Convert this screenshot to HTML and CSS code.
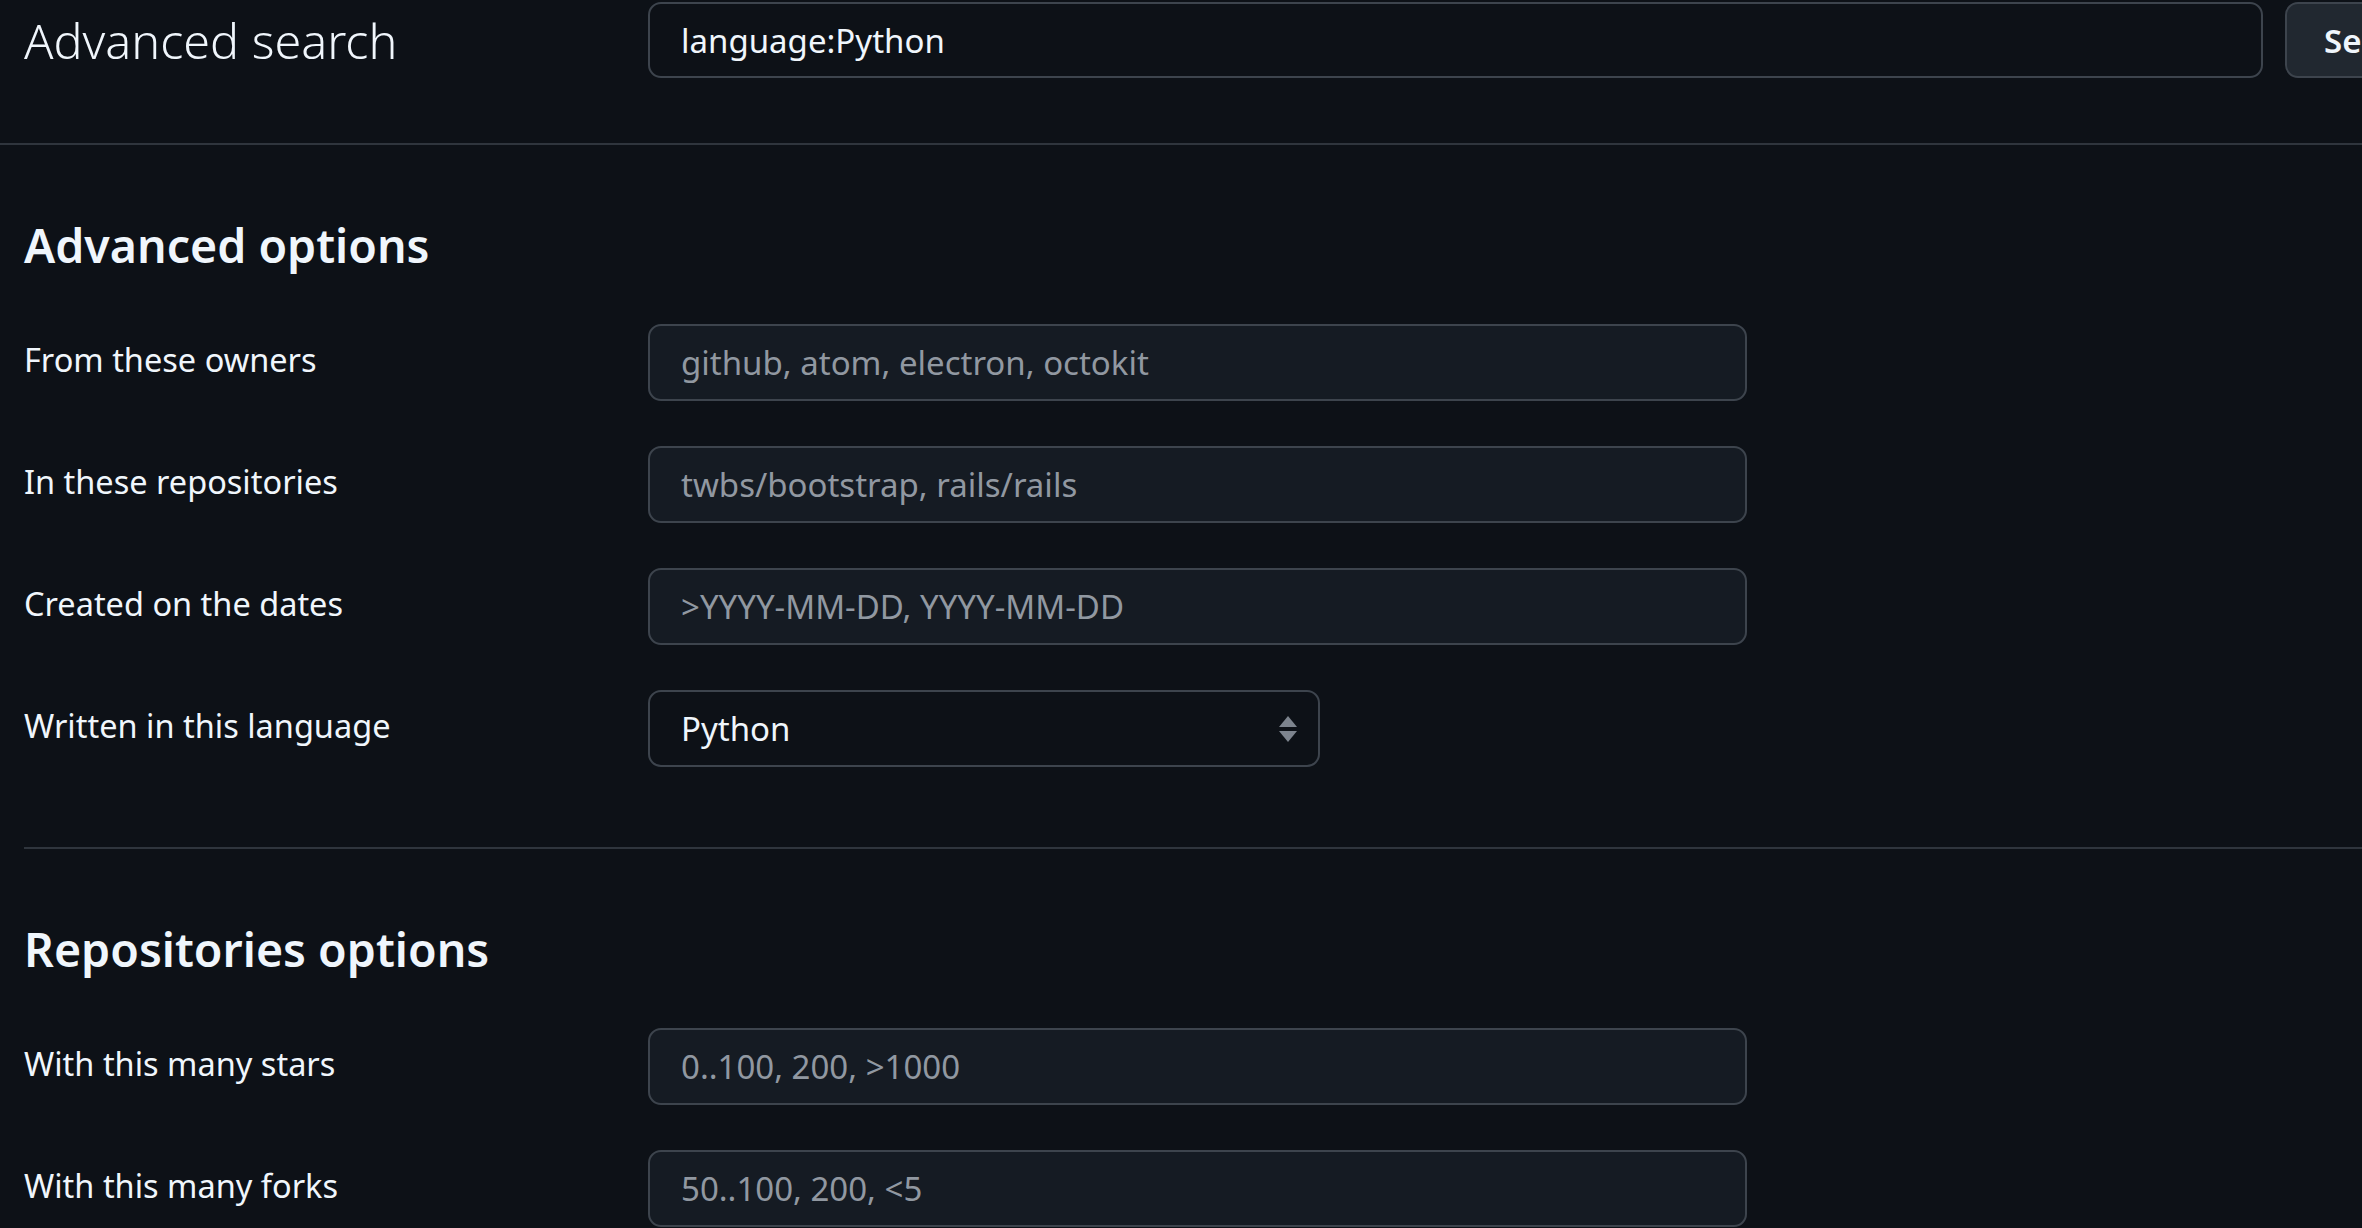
FILE: index.html
```html
<!DOCTYPE html>
<html lang="en">
<head>
    <meta charset="UTF-8">
    <meta name="viewport" content="width=device-width, initial-scale=1.0">
    <title>Advanced search</title>
    <link rel="stylesheet" href="styles.css">
</head>
<body>
    <header class="search-bar">
        <h1 class="page-title">Advanced search</h1>
        <input class="search-input" type="text" value="language:Python">
        <button class="search-btn">Search</button>
    </header>

    <main class="content">
        <section class="options">
            <h2>Advanced options</h2>
            <div class="form-row">
                <label>From these owners</label>
                <input class="field" type="text" placeholder="github, atom, electron, octokit">
            </div>
            <div class="form-row">
                <label>In these repositories</label>
                <input class="field" type="text" placeholder="twbs/bootstrap, rails/rails">
            </div>
            <div class="form-row">
                <label>Created on the dates</label>
                <input class="field" type="text" placeholder="&gt;YYYY-MM-DD, YYYY-MM-DD">
            </div>
            <div class="form-row">
                <label>Written in this language</label>
                <div class="select-wrap">
                    <select class="select">
                        <option>Python</option>
                    </select>
                    <svg class="select-arrows" width="18" height="26" viewBox="0 0 18 26">
                        <path d="M9 0 L18 11 L0 11 Z" fill="#7d848e"/>
                        <path d="M0 15 L18 15 L9 26 Z" fill="#7d848e"/>
                    </svg>
                </div>
            </div>
        </section>

        <section class="options divided">
            <h2>Repositories options</h2>
            <div class="form-row">
                <label>With this many stars</label>
                <input class="field" type="text" placeholder="0..100, 200, &gt;1000">
            </div>
            <div class="form-row">
                <label>With this many forks</label>
                <input class="field" type="text" placeholder="50..100, 200, &lt;5">
            </div>
        </section>
    </main>
</body>
</html>
```

FILE: styles.css
```css
body {
    margin: 0;
    padding: 0;
    background-color: #0d1117;
    color: #f0f6fc;
    font-family: "Noto Sans", "Open Sans", Arial, sans-serif;
    overflow: hidden;
    width: 2362px;
    height: 1228px;
}
.search-bar {
    display: flex;
    align-items: center;
    margin-top: 2px;
    padding: 0 0 65px 24px;
    border-bottom: 2px solid #2f353d;
}
.page-title {
    width: 624px;
    flex: none;
    margin: 0;
    font-size: 48.5px;
    font-weight: 300;
    line-height: 1.2;
}
.search-input {
    width: 1615px;
    height: 76px;
    flex: none;
    box-sizing: border-box;
    padding: 0 31px;
    background-color: #0d1117;
    color: #f0f6fc;
    border: 2px solid #3d444d;
    border-radius: 13px;
    font-family: "Noto Sans", "Open Sans", Arial, sans-serif;
    font-size: 33px;
    outline: none;
}
.search-btn {
    flex: none;
    margin-left: 22px;
    height: 76px;
    padding: 0 37px;
    background-color: #212830;
    color: #f0f6fc;
    border: 2px solid #3d444d;
    border-radius: 13px;
    font-family: "Noto Sans", "Open Sans", Arial, sans-serif;
    font-size: 33px;
    font-weight: 600;
}
.content {
    padding: 0 0 0 24px;
}
.options h2 {
    margin: 71px 0 50px;
    font-size: 46.5px;
    font-weight: 600;
    line-height: 58px;
}
.divided {
    margin-top: 80px;
    border-top: 2px solid #2f353d;
}
.form-row {
    display: flex;
    align-items: center;
    margin-bottom: 45px;
}
.form-row label {
    width: 624px;
    flex: none;
    font-size: 32.5px;
    margin-top: -6px;
}
.field {
    width: 1099px;
    height: 77px;
    box-sizing: border-box;
    padding: 0 31px;
    background-color: #151b23;
    color: #f0f6fc;
    border: 2px solid #3d444d;
    border-radius: 13px;
    font-family: "Noto Sans", "Open Sans", Arial, sans-serif;
    font-size: 33px;
    outline: none;
}
.field::placeholder {
    color: #9198a1;
}
.select-wrap {
    position: relative;
    width: 672px;
    height: 77px;
}
.select {
    appearance: none;
    -webkit-appearance: none;
    width: 100%;
    height: 100%;
    box-sizing: border-box;
    padding: 0 31px;
    background-color: #0d1117;
    color: #f0f6fc;
    border: 2px solid #3d444d;
    border-radius: 13px;
    font-family: "Noto Sans", "Open Sans", Arial, sans-serif;
    font-size: 33px;
    outline: none;
}
.select-arrows {
    position: absolute;
    right: 23px;
    top: 26px;
}
```
